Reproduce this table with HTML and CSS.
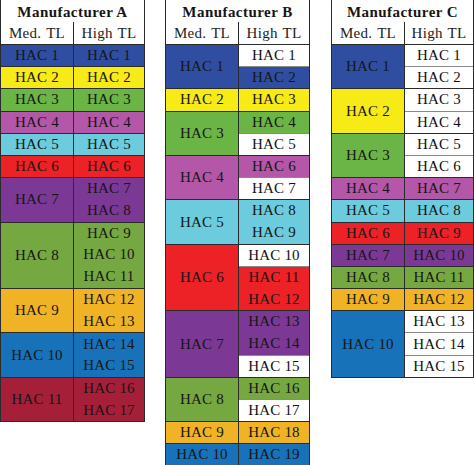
FILE: index.html
```html
<!doctype html>
<html lang="en">
<head>
    <meta charset="UTF-8">
    <title>HAC mapping</title>
    <link rel="stylesheet" href="styles.css">
</head>
<body>

    <div class="tables">

        <!-- Manufacturer A -->
        <div class="table">
            <div class="title">Manufacturer A</div>
            <div class="colhead med">Med. TL</div>
            <div class="colhead high">High TL</div>

            <div class="med blue g">HAC 1</div>
            <div class="high blue g">HAC 1</div>

            <div class="med yellow g">HAC 2</div>
            <div class="high yellow g">HAC 2</div>

            <div class="med green g">HAC 3</div>
            <div class="high green g">HAC 3</div>

            <div class="med magenta g">HAC 4</div>
            <div class="high magenta g">HAC 4</div>

            <div class="med cyan g">HAC 5</div>
            <div class="high cyan g">HAC 5</div>

            <div class="med red g">HAC 6</div>
            <div class="high red g">HAC 6</div>

            <div class="med purple g r2">HAC 7</div>
            <div class="high purple g">HAC 7</div>
            <div class="high purple">HAC 8</div>

            <div class="med olive g r3">HAC 8</div>
            <div class="high olive g">HAC 9</div>
            <div class="high olive">HAC 10</div>
            <div class="high olive">HAC 11</div>

            <div class="med orange g r2">HAC 9</div>
            <div class="high orange g">HAC 12</div>
            <div class="high orange">HAC 13</div>

            <div class="med azure g r2">HAC 10</div>
            <div class="high azure g">HAC 14</div>
            <div class="high azure">HAC 15</div>

            <div class="med crimson g r2">HAC 11</div>
            <div class="high crimson g">HAC 16</div>
            <div class="high crimson">HAC 17</div>
        </div>

        <!-- Manufacturer B -->
        <div class="table">
            <div class="title">Manufacturer B</div>
            <div class="colhead med">Med. TL</div>
            <div class="colhead high">High TL</div>

            <div class="med blue g r2">HAC 1</div>
            <div class="high white g">HAC 1</div>
            <div class="high blue s">HAC 2</div>

            <div class="med yellow g">HAC 2</div>
            <div class="high yellow g">HAC 3</div>

            <div class="med green g r2">HAC 3</div>
            <div class="high green g">HAC 4</div>
            <div class="high white s">HAC 5</div>

            <div class="med magenta g r2">HAC 4</div>
            <div class="high magenta g">HAC 6</div>
            <div class="high white s">HAC 7</div>

            <div class="med cyan g r2">HAC 5</div>
            <div class="high cyan g">HAC 8</div>
            <div class="high cyan">HAC 9</div>

            <div class="med red g r3">HAC 6</div>
            <div class="high white g">HAC 10</div>
            <div class="high red s">HAC 11</div>
            <div class="high red">HAC 12</div>

            <div class="med purple g r3">HAC 7</div>
            <div class="high purple g">HAC 13</div>
            <div class="high purple">HAC 14</div>
            <div class="high white s">HAC 15</div>

            <div class="med olive g r2">HAC 8</div>
            <div class="high olive g">HAC 16</div>
            <div class="high white s">HAC 17</div>

            <div class="med orange g">HAC 9</div>
            <div class="high orange g">HAC 18</div>

            <div class="med azure g">HAC 10</div>
            <div class="high azure g">HAC 19</div>
        </div>

        <!-- Manufacturer C -->
        <div class="table last">
            <div class="title">Manufacturer C</div>
            <div class="colhead med">Med. TL</div>
            <div class="colhead high">High TL</div>

            <div class="med blue g r2">HAC 1</div>
            <div class="high white g">HAC 1</div>
            <div class="high white s">HAC 2</div>

            <div class="med yellow g r2">HAC 2</div>
            <div class="high white g">HAC 3</div>
            <div class="high white s">HAC 4</div>

            <div class="med green g r2">HAC 3</div>
            <div class="high white g">HAC 5</div>
            <div class="high white s">HAC 6</div>

            <div class="med magenta g">HAC 4</div>
            <div class="high magenta g">HAC 7</div>

            <div class="med cyan g">HAC 5</div>
            <div class="high cyan g">HAC 8</div>

            <div class="med red g">HAC 6</div>
            <div class="high red g">HAC 9</div>

            <div class="med purple g">HAC 7</div>
            <div class="high purple g">HAC 10</div>

            <div class="med olive g">HAC 8</div>
            <div class="high olive g">HAC 11</div>

            <div class="med orange g">HAC 9</div>
            <div class="high orange g">HAC 12</div>

            <div class="med azure g r3">HAC 10</div>
            <div class="high white g">HAC 13</div>
            <div class="high white s">HAC 14</div>
            <div class="high white s">HAC 15</div>
        </div>

    </div>

</body>
</html>
```

FILE: styles.css
```css
*
{
    box-sizing:       border-box;
}

body
{
    margin:           0;
    background-color: #fff;
    font-family:      "Liberation Serif", "Times New Roman", serif;
    font-size:        15px;
    color:            #161616;
}

.tables
{
    display:          flex;
    align-items:      flex-start;
    gap:              20px;
}

.table
{
    display:          grid;
    grid-template-columns: 73px 70px;
    grid-template-rows: 22px 22px;
    grid-auto-rows:   22.2px;
    border-left:      1px solid #2b2b2b;
    border-right:     1px solid #2b2b2b;
    border-bottom:    1px solid #2b2b2b;
}

.table.last
{
    margin-left:      1px;
    grid-template-columns: 73px 68px;
}

.title
{
    grid-column:      1 / 3;
    font-weight:      bold;
    letter-spacing:   0.45px;
    display:          flex;
    align-items:      center;
    justify-content:  center;
    padding-top:      2px;
}

.med, .high
{
    display:          flex;
    align-items:      center;
    justify-content:  center;
    white-space:      nowrap;
    font-family:      "Liberation Serif", "Times New Roman", serif;
    letter-spacing:   0.2px;
}

.med
{
    grid-column:      1;
    border-right:     1px solid #2b2b2b;
}

.high
{
    grid-column:      2;
}

.colhead
{
    background-color: #fff;
    color:            #222;
    letter-spacing:   0.3px;
    word-spacing:     1px;
}

.r2 { grid-row: span 2; }
.r3 { grid-row: span 3; }

.g { border-top: 1px solid #2b2b2b; }
.s { border-top: 1px solid #8a8a8a; }

.white   { background-color: #ffffff; color: #111; }
.blue    { background-color: #2f4ea1; }
.yellow  { background-color: #f6ea17; }
.green   { background-color: #6bb546; }
.magenta { background-color: #b457a8; }
.cyan    { background-color: #6ccbdc; }
.red     { background-color: #ec2227; }
.purple  { background-color: #7b3995; }
.olive   { background-color: #76a842; }
.orange  { background-color: #f0b325; }
.azure   { background-color: #1872b9; }
.crimson { background-color: #a51f38; }
```
